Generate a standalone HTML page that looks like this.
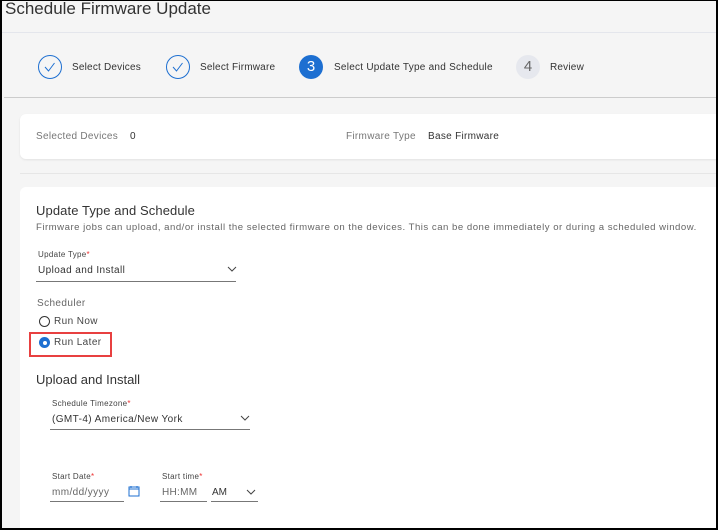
<!DOCTYPE html><html><head><style>
body{margin:0;width:718px;height:530px;overflow:hidden;background:#000;font-family:"Liberation Sans",sans-serif;}
#p{position:absolute;left:2px;top:1px;width:714px;height:527px;background:#f5f5f5;overflow:hidden}
.a{position:absolute;white-space:nowrap}
.c{position:absolute;width:24px;height:24px;border-radius:50%;box-sizing:border-box}
.s{font-size:10px;color:#333;letter-spacing:.2px}
.lab{font-size:8px;color:#444;letter-spacing:.3px}
.req{color:#e33}
.ul{position:absolute;height:1px;background:#777}
</style></head><body><div id="p">
<div class="a" style="left:3px;top:-2px;font-size:17px;color:#333">Schedule Firmware Update</div>
<div class="a" style="left:0;top:31px;width:714px;height:1px;background:#e4e6ec"></div>
<div class="c" style="left:36px;top:54px;border:1.5px solid #1d6fd1"><svg width="21" height="21" style="position:absolute;left:0;top:0"><path d="M6 11 L9.5 15 L15.5 7" stroke="#1d6fd1" fill="none" stroke-width="1"/></svg></div>
<div class="a s" style="left:70px;top:61px">Select Devices</div>
<div class="c" style="left:164px;top:54px;border:1.5px solid #1d6fd1"><svg width="21" height="21" style="position:absolute;left:0;top:0"><path d="M6 11 L9.5 15 L15.5 7" stroke="#1d6fd1" fill="none" stroke-width="1"/></svg></div>
<div class="a s" style="left:198px;top:61px">Select Firmware</div>
<div class="c" style="left:297px;top:54px;background:#1d6fd1;color:#fff;font-size:15px;text-align:center;line-height:24px">3</div>
<div class="a s" style="left:332px;top:61px;letter-spacing:.25px">Select Update Type and Schedule</div>
<div class="c" style="left:514px;top:54px;background:#e6e8ee;color:#666;font-size:15px;text-align:center;line-height:24px">4</div>
<div class="a s" style="left:548px;top:61px">Review</div>
<div class="a" style="left:2px;top:96px;width:712px;height:1px;background:#ccc"></div>
<div class="a" style="left:18px;top:113px;width:720px;height:45px;background:#fff;border-radius:6px;box-shadow:0 1px 2px rgba(0,0,0,.08)"></div>
<div class="a" style="left:34px;top:130px;font-size:10px;color:#777;letter-spacing:.3px">Selected Devices</div>
<div class="a" style="left:128px;top:130px;font-size:10px;color:#333">0</div>
<div class="a" style="left:344px;top:130px;font-size:10px;color:#777;letter-spacing:.3px">Firmware Type</div>
<div class="a" style="left:426px;top:130px;font-size:10px;color:#333;letter-spacing:.3px">Base Firmware</div>
<div class="a" style="left:18px;top:172px;width:700px;height:1px;background:#e6e6e6"></div>
<div class="a" style="left:18px;top:186px;width:720px;height:360px;background:#fff;border-radius:6px"></div>
<div class="a" style="left:34px;top:202px;font-size:13px;color:#333;letter-spacing:.1px">Update Type and Schedule</div>
<div class="a" style="left:34px;top:221px;font-size:9.6px;color:#666;letter-spacing:.5px">Firmware jobs can upload, and/or install the selected firmware on the devices. This can be done immediately or during a scheduled window.</div>
<div class="a lab" style="left:36px;top:249px">Update Type<span class="req">*</span></div>
<div class="a" style="left:36px;top:264px;font-size:10px;color:#333;letter-spacing:.4px">Upload and Install</div>
<svg class="a" style="left:225px;top:265px" width="10" height="6"><path d="M1 1 L5 5 L9 1" stroke="#444" fill="none"/></svg>
<div class="ul" style="left:34px;top:280px;width:200px"></div>
<div class="a" style="left:35px;top:297px;font-size:10px;color:#666;letter-spacing:.4px">Scheduler</div>
<div class="a" style="left:37px;top:315px;width:9px;height:9px;border:1px solid #333;border-radius:50%"></div>
<div class="a" style="left:52px;top:315px;font-size:10px;color:#444;letter-spacing:.4px">Run Now</div>
<div class="a" style="left:37px;top:336px;width:11px;height:11px;border-radius:50%;background:#1d6fd1"><div style="position:absolute;left:3.5px;top:3.5px;width:4px;height:4px;border-radius:50%;background:#fff"></div></div>
<div class="a" style="left:52px;top:336px;font-size:10px;color:#444;letter-spacing:.4px">Run Later</div>
<div class="a" style="left:27px;top:331px;width:79px;height:21px;border:2px solid #e84040"></div>
<div class="a" style="left:34px;top:371px;font-size:13px;color:#333">Upload and Install</div>
<div class="a lab" style="left:50px;top:398px">Schedule Timezone<span class="req">*</span></div>
<div class="a" style="left:50px;top:413px;font-size:10px;color:#333;letter-spacing:.4px">(GMT-4) America/New York</div>
<svg class="a" style="left:238px;top:414px" width="10" height="6"><path d="M1 1 L5 5 L9 1" stroke="#444" fill="none"/></svg>
<div class="ul" style="left:48px;top:428px;width:200px"></div>
<div class="a lab" style="left:50px;top:471px">Start Date<span class="req">*</span></div>
<div class="a" style="left:50px;top:486px;font-size:10px;color:#666;letter-spacing:.4px">mm/dd/yyyy</div>
<svg class="a" style="left:126px;top:484px" width="12" height="12"><rect x="1" y="2" width="10" height="9" stroke="#1d6fd1" fill="none"/><path d="M3 1v2M9 1v2M1 4h10" stroke="#1d6fd1"/></svg>
<div class="ul" style="left:48px;top:500px;width:74px"></div>
<div class="a lab" style="left:160px;top:471px">Start time<span class="req">*</span></div>
<div class="a" style="left:160px;top:486px;font-size:10px;color:#666;letter-spacing:.3px">HH:MM</div>
<div class="ul" style="left:158px;top:500px;width:47px"></div>
<div class="a" style="left:210px;top:486px;font-size:10px;color:#333">AM</div>
<svg class="a" style="left:244px;top:488px" width="10" height="6"><path d="M1 1 L5 5 L9 1" stroke="#444" fill="none"/></svg>
<div class="ul" style="left:209px;top:500px;width:47px"></div>
</div></body></html>
